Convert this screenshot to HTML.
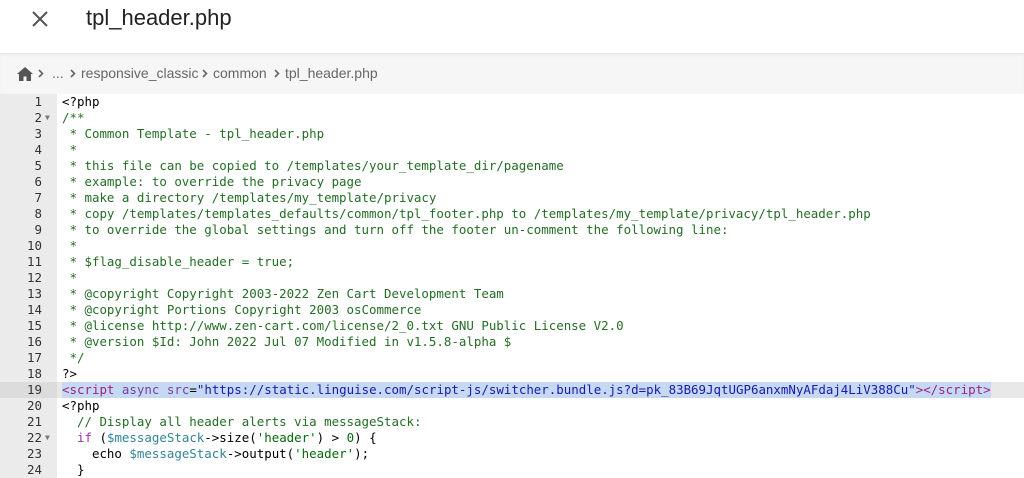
<!DOCTYPE html>
<html><head><style>
body{margin:0;width:1024px;height:478px;overflow:hidden;background:#fff;font-family:"Liberation Sans",Arial,sans-serif;}
.top{height:52px;position:relative;background:#fff;}
.title{position:absolute;left:86px;top:5px;font-size:22px;color:#222;}
.x{position:absolute;left:31px;top:10px;}
.bc{position:absolute;top:53px;left:0;width:1024px;height:41px;background:#f6f6f6;box-shadow:inset 0 3px 3px -2px #e0e0e0;font-size:14px;color:#666;}
.bc span{position:absolute;top:12px;}
.bc svg.ch{position:absolute;top:16px;}
.code{position:absolute;top:94px;left:0;width:1024px;height:384px;}
.gut{position:absolute;left:0;top:0;width:57px;height:384px;background:#ebebeb;}
.ln{position:relative;height:16px;line-height:16px;font-family:"DejaVu Sans Mono",monospace;font-size:12.45px;white-space:pre;color:#000;}
.ln .n{position:absolute;left:0;width:42px;text-align:right;color:#333;}
.ln .f{position:absolute;left:45px;color:#777;font-size:8px;}
.ln .t{position:absolute;left:62px;}
.ln .c{color:#236e24;}
.ln .k{color:#93a;}
.ln .s{color:#036a07;}
.ln .v{color:#318495;}
.hl{background:#e8e8e8;}
.ln .sel{background:#c5d9f4;}
.ln .tg{color:#a0237a;}
.ln .st{color:#1a1aa6;}
</style></head><body>
<div class="top">
<svg class="x" width="18" height="18" viewBox="0 0 18 18"><path d="M2 2L16 16M16 2L2 16" stroke="#555" stroke-width="2"/></svg>
<div class="title">tpl_header.php</div>
</div>
<div class="bc">
<svg style="position:absolute;left:17px;top:14px" width="16" height="14" viewBox="0 0 16 14"><path d="M8 0L0 7h2v7h4.5V9.5h3V14H14V7h2z" fill="#555"/></svg>
<svg class="ch" style="left:38px" width="6" height="9" viewBox="0 0 6 9"><path d="M1 1l3.5 3.5L1 8" stroke="#666" stroke-width="1.6" fill="none"/></svg>
<span style="left:52px">...</span>
<svg class="ch" style="left:70px" width="6" height="9" viewBox="0 0 6 9"><path d="M1 1l3.5 3.5L1 8" stroke="#666" stroke-width="1.6" fill="none"/></svg>
<span style="left:81px">responsive_classic</span>
<svg class="ch" style="left:202px" width="6" height="9" viewBox="0 0 6 9"><path d="M1 1l3.5 3.5L1 8" stroke="#666" stroke-width="1.6" fill="none"/></svg>
<span style="left:213px">common</span>
<svg class="ch" style="left:274px" width="6" height="9" viewBox="0 0 6 9"><path d="M1 1l3.5 3.5L1 8" stroke="#666" stroke-width="1.6" fill="none"/></svg>
<span style="left:285px">tpl_header.php</span>
</div>
<div class="code"><div class="gut"></div>
<div class="ln"><span class="n">1</span><span class="t">&lt;?php</span></div>
<div class="ln"><span class="n">2</span><span class="f">▼</span><span class="t c">/**</span></div>
<div class="ln"><span class="n">3</span><span class="t c"> * Common Template - tpl_header.php</span></div>
<div class="ln"><span class="n">4</span><span class="t c"> *</span></div>
<div class="ln"><span class="n">5</span><span class="t c"> * this file can be copied to /templates/your_template_dir/pagename</span></div>
<div class="ln"><span class="n">6</span><span class="t c"> * example: to override the privacy page</span></div>
<div class="ln"><span class="n">7</span><span class="t c"> * make a directory /templates/my_template/privacy</span></div>
<div class="ln"><span class="n">8</span><span class="t c"> * copy /templates/templates_defaults/common/tpl_footer.php to /templates/my_template/privacy/tpl_header.php</span></div>
<div class="ln"><span class="n">9</span><span class="t c"> * to override the global settings and turn off the footer un-comment the following line:</span></div>
<div class="ln"><span class="n">10</span><span class="t c"> *</span></div>
<div class="ln"><span class="n">11</span><span class="t c"> * $flag_disable_header = true;</span></div>
<div class="ln"><span class="n">12</span><span class="t c"> *</span></div>
<div class="ln"><span class="n">13</span><span class="t c"> * @copyright Copyright 2003-2022 Zen Cart Development Team</span></div>
<div class="ln"><span class="n">14</span><span class="t c"> * @copyright Portions Copyright 2003 osCommerce</span></div>
<div class="ln"><span class="n">15</span><span class="t c"> * @license http://www.zen-cart.com/license/2_0.txt GNU Public License V2.0</span></div>
<div class="ln"><span class="n">16</span><span class="t c"> * @version $Id: John 2022 Jul 07 Modified in v1.5.8-alpha $</span></div>
<div class="ln"><span class="n">17</span><span class="t c"> */</span></div>
<div class="ln"><span class="n">18</span><span class="t">?&gt;</span></div>
<div class="ln hl"><span class="n" style="background:#dcdcdc;width:57px;"><span style="padding-right:15px">19</span></span><span class="t sel"><span class="tg">&lt;script</span> <span style="color:#7a3e9d">async</span> <span style="color:#7a3e9d">src</span>=<span class="st">"https://static.linguise.com/script-js/switcher.bundle.js?d=pk_83B69JqtUGP6anxmNyAFdaj4LiV388Cu"</span><span class="tg">&gt;&lt;/script&gt;</span></span></div>
<div class="ln"><span class="n">20</span><span class="t">&lt;?php</span></div>
<div class="ln"><span class="n">21</span><span class="t">  <span class="c">// Display all header alerts via messageStack:</span></span></div>
<div class="ln"><span class="n">22</span><span class="f">▼</span><span class="t">  <span class="k">if</span> (<span class="v">$messageStack</span>-&gt;size(<span class="s">'header'</span>) &gt; <span class="s">0</span>) {</span></div>
<div class="ln"><span class="n">23</span><span class="t">    echo <span class="v">$messageStack</span>-&gt;output(<span class="s">'header'</span>);</span></div>
<div class="ln"><span class="n">24</span><span class="t">  }</span></div>
</div>
</body></html>
